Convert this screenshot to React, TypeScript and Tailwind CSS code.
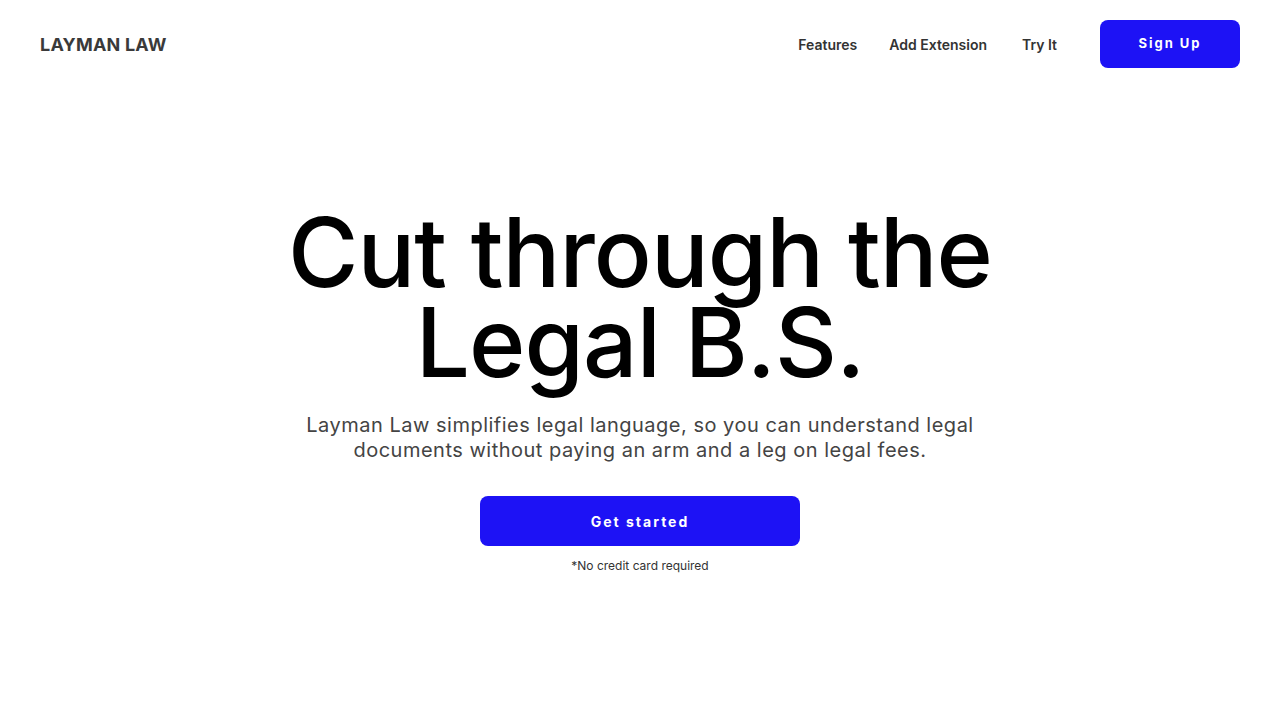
import React from "react";

export default function App() {
  return (
    <div className="min-h-screen w-full bg-white" style={{ fontFamily: "Inter, 'Liberation Sans', sans-serif" }}>
      <header className="flex h-[88px] items-center justify-between pl-10 pr-10">
        <div className="text-[18px] font-bold tracking-[0.2px] text-[#3a3a3a]">LAYMAN LAW</div>
        <nav className="flex items-center">
          <a className="text-[14px] font-semibold text-[#333]">Features</a>
          <a className="ml-8 text-[14px] font-semibold text-[#333]">Add Extension</a>
          <a className="ml-[35px] text-[14px] font-semibold text-[#333]">Try It</a>
          <button className="ml-[43px] flex h-12 w-[140px] items-center justify-center rounded-lg bg-[#1d12f5] text-[13px] font-bold tracking-[2px] text-white">
            Sign Up
          </button>
        </nav>
      </header>
      <main className="flex flex-col items-center pt-[119px]">
        <h1 className="text-center text-[96px] font-medium leading-[90px] tracking-[-0.9px] text-black">
          Cut through the
          <br />
          Legal B.S.
        </h1>
        <p className="mt-[26px] w-[720px] text-center text-[20px] leading-[25px] tracking-[0.5px] text-[#444]">
          Layman Law simplifies legal language, so you can understand legal documents without paying an arm and a leg on legal fees.
        </p>
        <button className="mt-[33px] flex h-[50px] w-[320px] items-center justify-center rounded-lg bg-[#1d12f5] text-[14px] font-bold tracking-[2px] text-white">
          Get started
        </button>
        <p className="mt-[11px] text-[12px] text-[#333]">*No credit card required</p>
      </main>
    </div>
  );
}
